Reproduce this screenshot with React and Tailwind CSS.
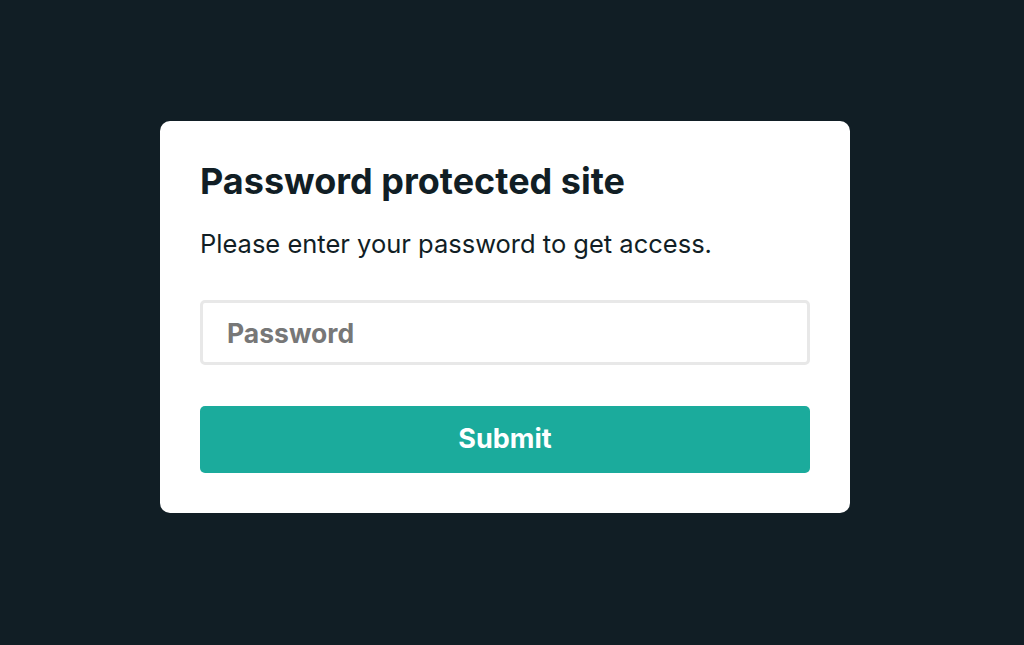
import React from "react";

export default function App() {
   return (
      <div
         className="min-h-screen w-full bg-[#111e25] flex items-center justify-center pr-[14px] pb-[11px]"
         style={{ fontFamily: "Inter, 'Noto Sans', sans-serif" }}
      >
         <div className="w-[690px] bg-white rounded-[10px] px-10 pt-[38px] pb-10">
            <h1 className="text-[36px] leading-[44px] font-bold text-[#111e25]">
               Password protected site
            </h1>
            <p className="mt-[25px] text-[25.5px] leading-[32px] text-[#111e25]">
               Please enter your password to get access.
            </p>
            <form className="mt-[40px]" onSubmit={(e) => e.preventDefault()}>
               <input
                  type="password"
                  placeholder="Password"
                  className="block w-full h-[65px] px-[24px] border-[3px] border-[#e8e8e8] rounded-[5px] text-[26.5px] font-bold text-[#333] placeholder:text-[#777] outline-none"
               />
               <button
                  type="submit"
                  className="mt-[41px] block w-full h-[67px] rounded-[5px] bg-[#1bab9c] text-white text-[27px] font-bold"
               >
                  Submit
               </button>
            </form>
         </div>
      </div>
   );
}
